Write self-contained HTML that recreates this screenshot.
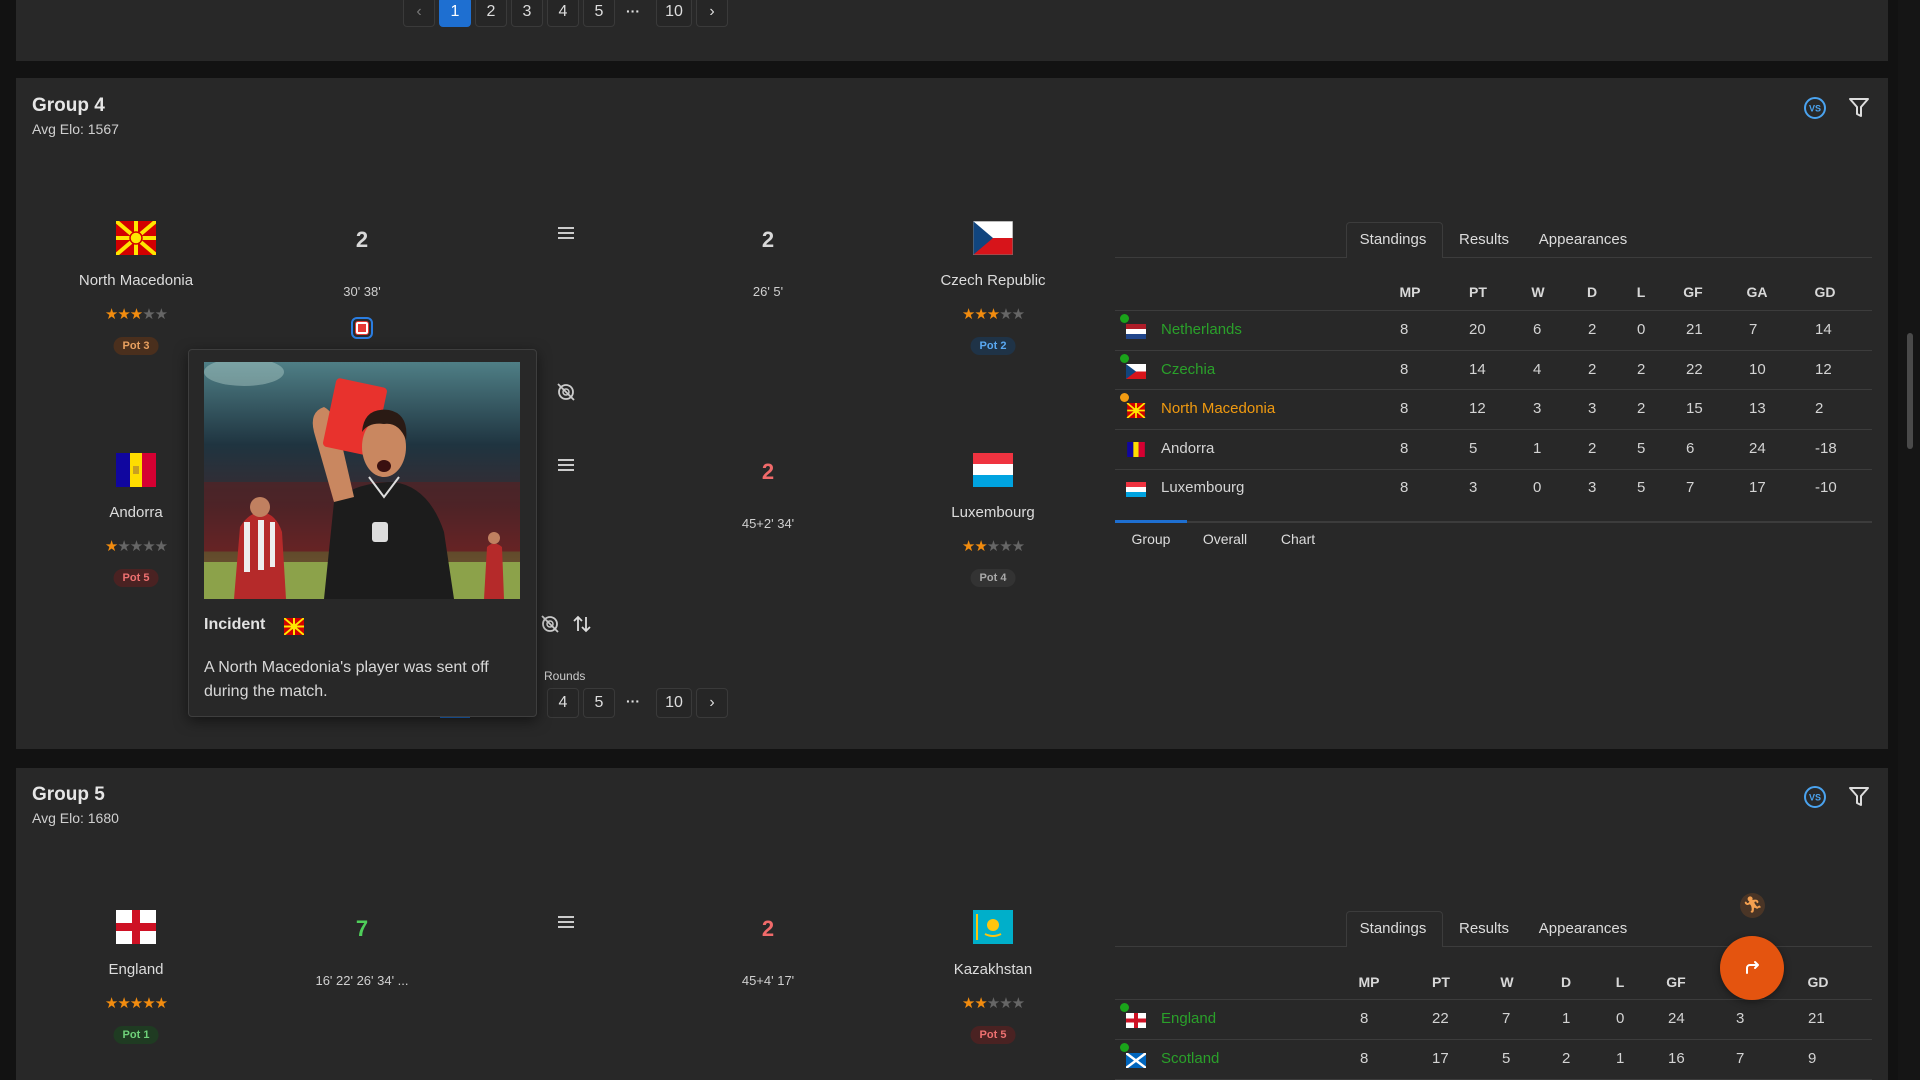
<!DOCTYPE html>
<html><head><meta charset="utf-8">
<style>
*{box-sizing:border-box;margin:0;padding:0}
body{width:1920px;height:1080px;overflow:hidden;background:#121212;font-family:"Liberation Sans",sans-serif;color:#e2e2e2;position:relative}
.card{position:absolute;left:16px;width:1872px;background:#282828}
.a{position:absolute}
.c{position:absolute;transform:translateX(-50%);white-space:nowrap;text-align:center}
.pg{position:absolute;width:32px;height:30px;border:1px solid #3a3a3a;border-radius:4px;font-size:16px;color:#ddd;display:flex;align-items:center;justify-content:center;background:#262626}
.pg.on{background:#1e6fd1;border-color:#1e6fd1;color:#fff}
.title{font-size:19px;font-weight:bold;color:#e6e6e6}
.elo{font-size:14px;color:#d0d0d0}
.name{font-size:15px;color:#dcdcdc}
.score{font-size:22px;font-weight:bold;color:#d8d8d8}
.min{font-size:13px;color:#cfcfcf}
.stars{font-size:15px;letter-spacing:-1px}
.stars .o{color:#f28c0f}.stars .g{color:#666}
.pot{font-size:11px;font-weight:bold;padding:3px 9px;border-radius:10px}
.ham{position:absolute;width:16px;height:12px;border-top:2px solid #ccc;border-bottom:2px solid #ccc}
.ham:after{content:"";position:absolute;left:0;right:0;top:3px;border-top:2px solid #ccc}
.tab{font-size:15px;color:#dcdcdc}
.th{font-size:14px;font-weight:bold;color:#d8d8d8}
.td{font-size:15px;color:#d4d4d4}
.line{position:absolute;height:1px;background:#3c3c3c}
.dot{position:absolute;width:9px;height:9px;border-radius:50%}
</style></head><body>

<!-- top card -->
<div class="card" style="top:0;height:61px"></div>
<div class="pg" style="left:403px;top:-3px;color:#777">‹</div>
<div class="pg on" style="left:439px;top:-3px">1</div>
<div class="pg" style="left:475px;top:-3px">2</div>
<div class="pg" style="left:511px;top:-3px">3</div>
<div class="pg" style="left:547px;top:-3px">4</div>
<div class="pg" style="left:583px;top:-3px">5</div>
<div class="a" style="left:626px;top:3px;font-size:14px;font-weight:bold">···</div>
<div class="pg" style="left:656px;top:-3px;width:36px">10</div>
<div class="pg" style="left:696px;top:-3px">›</div>

<!-- Group 4 card -->
<div class="card" style="top:78px;height:671px"></div>
<div class="a title" style="left:32px;top:95px">Group 4</div>
<div class="a elo" style="left:32px;top:121px">Avg Elo: 1567</div>
<svg class="a" style="left:1803px;top:96px" width="24" height="24" viewBox="0 0 24 24"><circle cx="12" cy="12" r="10" fill="none" stroke="#4aa3ef" stroke-width="2"/><text x="12" y="15.5" font-size="9" font-weight="bold" fill="#4aa3ef" text-anchor="middle" font-family="Liberation Sans">VS</text></svg>
<svg class="a" style="left:1847px;top:97px" width="24" height="22" viewBox="0 0 24 22"><path d="M3 2h18l-7 8v9l-4-2v-7z" fill="none" stroke="#ddd" stroke-width="2" stroke-linejoin="round"/></svg>

<!-- match 1 -->
<svg class="a" style="left:116px;top:221px" width="40" height="34" viewBox="0 0 40 34"><rect width="40" height="34" fill="#d20000"/><g stroke="#ffe600" stroke-width="4"><line x1="0" y1="0" x2="40" y2="34"/><line x1="40" y1="0" x2="0" y2="34"/><line x1="20" y1="0" x2="20" y2="34"/><line x1="0" y1="17" x2="40" y2="17"/></g><circle cx="20" cy="17" r="6" fill="#ffe600" stroke="#d20000" stroke-width="1.5"/></svg>
<div class="c name" style="left:136px;top:272px">North Macedonia</div>
<div class="c stars" style="left:136px;top:305px"><span class="o">★★★</span><span class="g">★★</span></div>
<div class="c pot" style="left:136px;top:337px;background:#4a2f1d;color:#e9a060">Pot 3</div>
<div class="c score" style="left:362px;top:227px">2</div>
<div class="c min" style="left:362px;top:284px">30' 38'</div>
<div class="a" style="left:351px;top:317px;width:22px;height:22px;border:2px solid #2a7de1;border-radius:6px;background:#2a2a2a"><div style="margin:3px;width:12px;height:12px;background:#e53935;border:2px solid #fff;border-radius:2px;box-shadow:0 0 0 1px #e53935"></div></div>
<div class="ham" style="left:558px;top:227px"></div>
<div class="c score" style="left:768px;top:227px">2</div>
<div class="c min" style="left:768px;top:284px">26' 5'</div>
<svg class="a" style="left:973px;top:221px" width="40" height="34" viewBox="0 0 40 34"><rect width="40" height="17" fill="#fff"/><rect y="17" width="40" height="17" fill="#d7141a"/><path d="M0 0L20 17L0 34z" fill="#11457e"/><rect width="40" height="34" fill="none" stroke="#777" stroke-width="1"/></svg>
<div class="c name" style="left:993px;top:272px">Czech Republic</div>
<div class="c stars" style="left:993px;top:305px"><span class="o">★★★</span><span class="g">★★</span></div>
<div class="c pot" style="left:993px;top:337px;background:#1f3347;color:#5aa9f2">Pot 2</div>

<svg class="a" style="left:556px;top:382px" width="20" height="20" viewBox="0 0 20 20"><circle cx="10" cy="10" r="7" fill="none" stroke="#ccc" stroke-width="1.8"/><circle cx="10" cy="10" r="3" fill="none" stroke="#ccc" stroke-width="1.5"/><line x1="2" y1="2" x2="18" y2="18" stroke="#ccc" stroke-width="1.8"/></svg>

<!-- match 2 -->
<svg class="a" style="left:116px;top:453px" width="40" height="34" viewBox="0 0 40 34"><rect width="14" height="34" fill="#10069f"/><rect x="14" width="12" height="34" fill="#fedd00"/><rect x="26" width="14" height="34" fill="#d50032"/><rect x="17" y="13" width="6" height="8" fill="#c8a020"/></svg>
<div class="c name" style="left:136px;top:504px">Andorra</div>
<div class="c stars" style="left:136px;top:537px"><span class="o">★</span><span class="g">★★★★</span></div>
<div class="c pot" style="left:136px;top:569px;background:#4a2222;color:#ee7070">Pot 5</div>
<div class="ham" style="left:558px;top:459px"></div>
<div class="c score" style="left:768px;top:459px;color:#f06a6a">2</div>
<div class="c min" style="left:768px;top:516px">45+2' 34'</div>
<svg class="a" style="left:973px;top:453px" width="40" height="34" viewBox="0 0 40 34"><rect width="40" height="12" fill="#ef3340"/><rect y="11" width="40" height="12" fill="#fff"/><rect y="22" width="40" height="12" fill="#00a3e0"/></svg>
<div class="c name" style="left:993px;top:504px">Luxembourg</div>
<div class="c stars" style="left:993px;top:537px"><span class="o">★★</span><span class="g">★★★</span></div>
<div class="c pot" style="left:993px;top:569px;background:#333;color:#aaa">Pot 4</div>

<svg class="a" style="left:540px;top:614px" width="20" height="20" viewBox="0 0 20 20"><circle cx="10" cy="10" r="7" fill="none" stroke="#ccc" stroke-width="1.8"/><circle cx="10" cy="10" r="3" fill="none" stroke="#ccc" stroke-width="1.5"/><line x1="2" y1="2" x2="18" y2="18" stroke="#ccc" stroke-width="1.8"/></svg>
<svg class="a" style="left:572px;top:614px" width="20" height="20" viewBox="0 0 20 20"><path d="M6 17V3M2 7l4-4 4 4M14 3v14M10 13l4 4 4-4" fill="none" stroke="#ddd" stroke-width="1.8"/></svg>
<div class="a" style="left:544px;top:669px;font-size:12px;color:#ccc">Rounds</div>
<div class="pg" style="left:547px;top:688px">4</div>
<div class="pg" style="left:583px;top:688px">5</div>
<div class="a" style="left:626px;top:693px;font-size:14px;font-weight:bold">···</div>
<div class="pg" style="left:656px;top:688px;width:36px">10</div>
<div class="pg" style="left:696px;top:688px">›</div>
<div class="a" style="left:440px;top:714px;width:30px;height:4px;background:#1e6fd1"></div>

<!-- popover -->
<div class="a" style="left:188px;top:349px;width:349px;height:368px;background:#282828;border:1px solid #3e3e3e;border-radius:4px;box-shadow:0 4px 14px rgba(0,0,0,.5)"></div>
<svg class="a" style="left:204px;top:362px" width="316" height="237" viewBox="0 0 316 237">
<defs><linearGradient id="sk" x1="0" y1="0" x2="0" y2="1"><stop offset="0" stop-color="#4f7f86"/><stop offset=".35" stop-color="#1f3440"/><stop offset=".6" stop-color="#3a2a30"/><stop offset=".8" stop-color="#7a2a2a"/><stop offset=".8" stop-color="#6c8a3a"/><stop offset="1" stop-color="#a6b75a"/></linearGradient></defs>
<rect width="316" height="237" fill="url(#sk)"/>
<rect x="0" y="120" width="316" height="85" fill="#5a1f22" opacity=".6"/>
<rect x="0" y="200" width="316" height="37" fill="#8ca24a"/>
<ellipse cx="40" cy="10" rx="40" ry="14" fill="#cfe8e0" opacity=".35"/>
<path d="M30 237L36 165Q45 150 58 150Q72 152 78 170L82 237z" fill="#b52a2a"/>
<path d="M40 160h6v50h-6zM54 158h6v50h-6zM66 160h5v45h-5z" fill="#eee"/>
<circle cx="56" cy="145" r="10" fill="#c08060"/>
<path d="M280 237L283 185Q290 178 298 185L300 237z" fill="#b52a2a"/>
<circle cx="290" cy="176" r="6" fill="#c08060"/>
<path d="M120 237L130 140Q150 120 190 120Q225 125 240 170L250 237z" fill="#1c1c1c"/>
<path d="M130 140L110 70Q105 50 120 45Q130 50 135 70L150 135z" fill="#c98760"/>
<rect x="125" y="20" width="52" height="70" rx="4" fill="#e8322d" transform="rotate(12 150 55)"/>
<ellipse cx="180" cy="85" rx="22" ry="30" fill="#c98760"/>
<path d="M158 70Q160 45 185 48Q205 52 202 78Q195 60 180 62Q165 60 158 70z" fill="#2a1a14"/>
<ellipse cx="180" cy="104" rx="7" ry="6" fill="#3a1010"/>
<path d="M165 115L180 135L195 115" fill="none" stroke="#ddd" stroke-width="2"/>
<rect x="168" y="160" width="16" height="20" rx="3" fill="#ddd"/>
</svg>
<div class="a" style="left:204px;top:616px;font-size:16px;font-weight:bold;color:#e2e2e2">Incident</div>
<svg class="a" style="left:284px;top:618px" width="20" height="17" viewBox="0 0 40 34"><rect width="40" height="34" fill="#d20000"/><g stroke="#ffe600" stroke-width="4"><line x1="0" y1="0" x2="40" y2="34"/><line x1="40" y1="0" x2="0" y2="34"/><line x1="20" y1="0" x2="20" y2="34"/><line x1="0" y1="17" x2="40" y2="17"/></g><circle cx="20" cy="17" r="6" fill="#ffe600"/></svg>
<div class="a" style="left:204px;top:656px;width:320px;font-size:16px;line-height:24px;color:#d8d8d8">A North Macedonia's player was sent off during the match.</div>

<!-- standings G4 -->
<div class="a" style="left:1346px;top:222px;width:97px;height:36px;border:1px solid #3c3c3c;border-bottom:none;border-radius:4px 4px 0 0;background:#282828"></div>
<div class="line" style="left:1115px;top:257px;width:757px"></div>
<div class="a" style="left:1347px;top:257px;width:95px;height:2px;background:#282828"></div>
<div class="c tab" style="left:1393px;top:231px">Standings</div>
<div class="c tab" style="left:1484px;top:231px">Results</div>
<div class="c tab" style="left:1583px;top:231px">Appearances</div>

<div class="c th" style="left:1410px;top:284px">MP</div>
<div class="c th" style="left:1478px;top:284px">PT</div>
<div class="c th" style="left:1538px;top:284px">W</div>
<div class="c th" style="left:1592px;top:284px">D</div>
<div class="c th" style="left:1641px;top:284px">L</div>
<div class="c th" style="left:1693px;top:284px">GF</div>
<div class="c th" style="left:1757px;top:284px">GA</div>
<div class="c th" style="left:1825px;top:284px">GD</div>
<div class="line" style="left:1115px;top:310px;width:757px"></div>
<div class="line" style="left:1115px;top:350px;width:757px"></div>
<div class="line" style="left:1115px;top:389px;width:757px"></div>
<div class="line" style="left:1115px;top:429px;width:757px"></div>
<div class="line" style="left:1115px;top:469px;width:757px"></div>
<div class="line" style="left:1115px;top:521px;width:757px;height:2px"></div>
<div class="a" style="left:1115px;top:520px;width:72px;height:3px;background:#1e6fd1"></div>

<!-- rows -->
<div class="dot" style="left:1120px;top:314px;background:#1aa31a"></div>
<svg class="a" style="left:1126px;top:324px" width="20" height="15" viewBox="0 0 3 3" preserveAspectRatio="none"><rect width="3" height="1" fill="#ae1c28"/><rect y="1" width="3" height="1" fill="#fff"/><rect y="2" width="3" height="1" fill="#21468b"/></svg>
<div class="a td" style="left:1161px;top:321px;color:#2aa02a">Netherlands</div>
<div class="dot" style="left:1120px;top:354px;background:#1aa31a"></div>
<svg class="a" style="left:1126px;top:364px" width="20" height="15" viewBox="0 0 40 30"><rect width="40" height="15" fill="#fff"/><rect y="15" width="40" height="15" fill="#d7141a"/><path d="M0 0L20 15L0 30z" fill="#11457e"/></svg>
<div class="a td" style="left:1161px;top:361px;color:#2aa02a">Czechia</div>
<div class="dot" style="left:1120px;top:393px;background:#f39c12"></div>
<svg class="a" style="left:1126px;top:403px" width="20" height="15" viewBox="0 0 40 34"><rect width="40" height="34" fill="#d20000"/><g stroke="#ffe600" stroke-width="4"><line x1="0" y1="0" x2="40" y2="34"/><line x1="40" y1="0" x2="0" y2="34"/><line x1="20" y1="0" x2="20" y2="34"/><line x1="0" y1="17" x2="40" y2="17"/></g><circle cx="20" cy="17" r="6" fill="#ffe600"/></svg>
<div class="a td" style="left:1161px;top:400px;color:#f09a10">North Macedonia</div>
<svg class="a" style="left:1126px;top:442px" width="20" height="15" viewBox="0 0 40 34"><rect width="14" height="34" fill="#10069f"/><rect x="14" width="12" height="34" fill="#fedd00"/><rect x="26" width="14" height="34" fill="#d50032"/></svg>
<div class="a td" style="left:1161px;top:440px">Andorra</div>
<svg class="a" style="left:1126px;top:482px" width="20" height="15" viewBox="0 0 3 3" preserveAspectRatio="none"><rect width="3" height="1" fill="#ef3340"/><rect y="1" width="3" height="1" fill="#fff"/><rect y="2" width="3" height="1" fill="#00a3e0"/></svg>
<div class="a td" style="left:1161px;top:479px">Luxembourg</div>

<div class="a td" style="left:1400px;top:321px">8</div><div class="a td" style="left:1469px;top:321px">20</div><div class="a td" style="left:1533px;top:321px">6</div><div class="a td" style="left:1588px;top:321px">2</div><div class="a td" style="left:1637px;top:321px">0</div><div class="a td" style="left:1686px;top:321px">21</div><div class="a td" style="left:1749px;top:321px">7</div><div class="a td" style="left:1815px;top:321px">14</div>
<div class="a td" style="left:1400px;top:361px">8</div><div class="a td" style="left:1469px;top:361px">14</div><div class="a td" style="left:1533px;top:361px">4</div><div class="a td" style="left:1588px;top:361px">2</div><div class="a td" style="left:1637px;top:361px">2</div><div class="a td" style="left:1686px;top:361px">22</div><div class="a td" style="left:1749px;top:361px">10</div><div class="a td" style="left:1815px;top:361px">12</div>
<div class="a td" style="left:1400px;top:400px">8</div><div class="a td" style="left:1469px;top:400px">12</div><div class="a td" style="left:1533px;top:400px">3</div><div class="a td" style="left:1588px;top:400px">3</div><div class="a td" style="left:1637px;top:400px">2</div><div class="a td" style="left:1686px;top:400px">15</div><div class="a td" style="left:1749px;top:400px">13</div><div class="a td" style="left:1815px;top:400px">2</div>
<div class="a td" style="left:1400px;top:440px">8</div><div class="a td" style="left:1469px;top:440px">5</div><div class="a td" style="left:1533px;top:440px">1</div><div class="a td" style="left:1588px;top:440px">2</div><div class="a td" style="left:1637px;top:440px">5</div><div class="a td" style="left:1686px;top:440px">6</div><div class="a td" style="left:1749px;top:440px">24</div><div class="a td" style="left:1815px;top:440px">-18</div>
<div class="a td" style="left:1400px;top:479px">8</div><div class="a td" style="left:1469px;top:479px">3</div><div class="a td" style="left:1533px;top:479px">0</div><div class="a td" style="left:1588px;top:479px">3</div><div class="a td" style="left:1637px;top:479px">5</div><div class="a td" style="left:1686px;top:479px">7</div><div class="a td" style="left:1749px;top:479px">17</div><div class="a td" style="left:1815px;top:479px">-10</div>

<div class="c tab" style="left:1151px;top:531px;font-size:14px">Group</div>
<div class="c tab" style="left:1225px;top:531px;font-size:14px">Overall</div>
<div class="c tab" style="left:1298px;top:531px;font-size:14px">Chart</div>

<!-- Group 5 -->
<div class="card" style="top:768px;height:312px"></div>
<div class="a title" style="left:32px;top:784px">Group 5</div>
<div class="a elo" style="left:32px;top:810px">Avg Elo: 1680</div>
<svg class="a" style="left:1803px;top:785px" width="24" height="24" viewBox="0 0 24 24"><circle cx="12" cy="12" r="10" fill="none" stroke="#4aa3ef" stroke-width="2"/><text x="12" y="15.5" font-size="9" font-weight="bold" fill="#4aa3ef" text-anchor="middle" font-family="Liberation Sans">VS</text></svg>
<svg class="a" style="left:1847px;top:786px" width="24" height="22" viewBox="0 0 24 22"><path d="M3 2h18l-7 8v9l-4-2v-7z" fill="none" stroke="#ddd" stroke-width="2" stroke-linejoin="round"/></svg>

<svg class="a" style="left:116px;top:910px" width="40" height="34" viewBox="0 0 40 34"><rect width="40" height="34" fill="#fff"/><rect x="16" width="8" height="34" fill="#ce1124"/><rect y="13" width="40" height="8" fill="#ce1124"/></svg>
<div class="c name" style="left:136px;top:961px">England</div>
<div class="c stars" style="left:136px;top:994px"><span class="o">★★★★★</span></div>
<div class="c pot" style="left:136px;top:1026px;background:#1f3b22;color:#6fd27a">Pot 1</div>
<div class="c score" style="left:362px;top:916px;color:#4fcf5a">7</div>
<div class="c min" style="left:362px;top:973px">16' 22' 26' 34' ...</div>
<div class="ham" style="left:558px;top:916px"></div>
<div class="c score" style="left:768px;top:916px;color:#f06a6a">2</div>
<div class="c min" style="left:768px;top:973px">45+4' 17'</div>
<svg class="a" style="left:973px;top:910px" width="40" height="34" viewBox="0 0 40 34"><rect width="40" height="34" fill="#00afca"/><circle cx="20" cy="15" r="6" fill="#fec50c"/><path d="M12 24q8 4 16 0" stroke="#fec50c" stroke-width="2" fill="none"/><rect x="3" y="4" width="2" height="26" fill="#fec50c"/></svg>
<div class="c name" style="left:993px;top:961px">Kazakhstan</div>
<div class="c stars" style="left:993px;top:994px"><span class="o">★★</span><span class="g">★★★</span></div>
<div class="c pot" style="left:993px;top:1026px;background:#4a2222;color:#ee7070">Pot 5</div>

<div class="a" style="left:1346px;top:911px;width:97px;height:36px;border:1px solid #3c3c3c;border-bottom:none;border-radius:4px 4px 0 0"></div>
<div class="line" style="left:1115px;top:946px;width:757px"></div>
<div class="a" style="left:1347px;top:946px;width:95px;height:2px;background:#282828"></div>
<div class="c tab" style="left:1393px;top:920px">Standings</div>
<div class="c tab" style="left:1484px;top:920px">Results</div>
<div class="c tab" style="left:1583px;top:920px">Appearances</div>
<div class="a" style="left:1740px;top:893px;width:25px;height:25px;border-radius:50%;background:#4a3526;color:#f5a050;font-size:16px;text-align:center;line-height:25px">🏃︎</div>

<div class="c th" style="left:1369px;top:974px">MP</div>
<div class="c th" style="left:1441px;top:974px">PT</div>
<div class="c th" style="left:1507px;top:974px">W</div>
<div class="c th" style="left:1566px;top:974px">D</div>
<div class="c th" style="left:1620px;top:974px">L</div>
<div class="c th" style="left:1676px;top:974px">GF</div>
<div class="c th" style="left:1818px;top:974px">GD</div>
<div class="line" style="left:1115px;top:999px;width:757px"></div>
<div class="line" style="left:1115px;top:1039px;width:757px"></div>
<div class="line" style="left:1115px;top:1079px;width:757px"></div>

<div class="dot" style="left:1120px;top:1003px;background:#1aa31a"></div>
<svg class="a" style="left:1126px;top:1013px" width="20" height="15" viewBox="0 0 40 30"><rect width="40" height="30" fill="#fff"/><rect x="16" width="8" height="30" fill="#ce1124"/><rect y="11" width="40" height="8" fill="#ce1124"/></svg>
<div class="a td" style="left:1161px;top:1010px;color:#2aa02a">England</div>
<div class="dot" style="left:1120px;top:1043px;background:#1aa31a"></div>
<svg class="a" style="left:1126px;top:1053px" width="20" height="15" viewBox="0 0 40 30"><rect width="40" height="30" fill="#0065bd"/><path d="M0 0L40 30M40 0L0 30" stroke="#fff" stroke-width="5"/></svg>
<div class="a td" style="left:1161px;top:1050px;color:#2aa02a">Scotland</div>

<div class="a td" style="left:1360px;top:1010px">8</div><div class="a td" style="left:1432px;top:1010px">22</div><div class="a td" style="left:1502px;top:1010px">7</div><div class="a td" style="left:1562px;top:1010px">1</div><div class="a td" style="left:1616px;top:1010px">0</div><div class="a td" style="left:1668px;top:1010px">24</div><div class="a td" style="left:1736px;top:1010px">3</div><div class="a td" style="left:1808px;top:1010px">21</div>
<div class="a td" style="left:1360px;top:1050px">8</div><div class="a td" style="left:1432px;top:1050px">17</div><div class="a td" style="left:1502px;top:1050px">5</div><div class="a td" style="left:1562px;top:1050px">2</div><div class="a td" style="left:1616px;top:1050px">1</div><div class="a td" style="left:1668px;top:1050px">16</div><div class="a td" style="left:1736px;top:1050px">7</div><div class="a td" style="left:1808px;top:1050px">9</div>

<div class="a" style="left:1720px;top:936px;width:64px;height:64px;border-radius:50%;background:#e4540f;box-shadow:0 2px 8px rgba(0,0,0,.4)"></div>
<svg class="a" style="left:1742px;top:958px" width="20" height="20" viewBox="0 0 20 20"><path d="M5 15V10a3 3 0 0 1 3-3h8M13 4l3 3-3 3" fill="none" stroke="#fff" stroke-width="2" stroke-linecap="round" stroke-linejoin="round"/></svg>

<!-- scrollbar -->
<div class="a" style="left:1898px;top:0;width:22px;height:1080px;background:#151515"></div>
<div class="a" style="left:1907px;top:333px;width:6px;height:116px;border-radius:3px;background:#4a4a4a"></div>
</body></html>
